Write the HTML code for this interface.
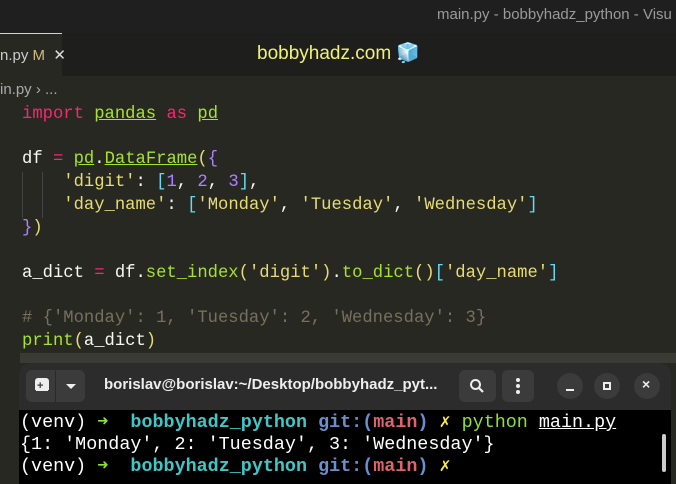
<!DOCTYPE html>
<html><head><style>
*{margin:0;padding:0;box-sizing:border-box}
body{width:676px;height:484px;overflow:hidden;background:#272822;position:relative;font-family:"Liberation Sans",sans-serif}
.abs{position:absolute;white-space:pre}
.code{font-family:"Liberation Mono",monospace;font-size:17.2px;color:#f8f8f2;line-height:20px}
.k{color:#f92672}.g{color:#a6e22e}.y{color:#e6db74}.b{color:#66d9ef}.p{color:#ae81ff}.c{color:#75715e}.u{text-decoration:underline;text-decoration-color:#a6e22e}
.term{font-family:"Liberation Mono",monospace;font-size:18.4px;color:#fff;line-height:22px}
.cy{color:#3fc7c7;font-weight:bold}.bl{color:#6a8fd0;font-weight:bold}.rd{color:#e0626a;font-weight:bold}
</style></head><body>
<div class="abs" style="left:0;top:0;width:676px;height:33px;background:#1f1f1f"></div>
<div class="abs" style="left:437px;top:6px;font-size:15px;color:#9a9a9a">main.py - bobbyhadz_python - Visu</div>
<div class="abs" style="left:0;top:33px;width:676px;height:43px;background:#1e1f1c"></div>
<div class="abs" style="left:0;top:33px;width:62px;height:43px;background:#272822;border-top:1px solid #e6db74"></div>
<div class="abs" style="left:0;top:46px;font-size:15px;color:#ccc">n.py <span style="color:#d4b97e">M</span>  <span style="color:#ddd">✕</span></div>
<div class="abs" style="left:257px;top:41px;font-size:19px;color:#f0f07a">bobbyhadz.com <span style="color:#6bb8e8">🧊</span></div>
<div class="abs" style="left:0;top:81px;font-size:15px;color:#aaa">in.py › ...</div>
<div class="abs code" style="left:22px;top:105px"><span class="k">import</span> <span class="g u">pandas</span> <span class="k">as</span> <span class="g u">pd</span></div>
<div class="abs code" style="left:22px;top:150px">df <span class="k">=</span> <span class="g u">pd</span>.<span class="g u">DataFrame</span><span class="y">(</span><span class="p">{</span></div>
<div class="abs" style="left:22px;top:172px;width:1px;height:46px;background:#444"></div>
<div class="abs" style="left:42px;top:172px;width:1px;height:46px;background:#444"></div>
<div class="abs code" style="left:22px;top:173px">    <span class="y">'digit'</span>: <span class="b">[</span><span class="p">1</span>, <span class="p">2</span>, <span class="p">3</span><span class="b">]</span>,</div>
<div class="abs code" style="left:22px;top:196px">    <span class="y">'day_name'</span>: <span class="b">[</span><span class="y">'Monday'</span>, <span class="y">'Tuesday'</span>, <span class="y">'Wednesday'</span><span class="b">]</span></div>
<div class="abs code" style="left:22px;top:219px"><span class="p">}</span><span class="y">)</span></div>
<div class="abs code" style="left:22px;top:264px">a_dict <span class="k">=</span> df.<span class="g">set_index</span><span class="y">(</span><span class="y">'digit'</span><span class="y">)</span>.<span class="g">to_dict</span><span class="y">()</span><span class="b">[</span><span class="y">'day_name'</span><span class="b">]</span></div>
<div class="abs code c" style="left:22px;top:309px"># {'Monday': 1, 'Tuesday': 2, 'Wednesday': 3}</div>
<div class="abs code" style="left:22px;top:332px"><span class="g">print</span><span class="y">(</span>a_dict<span class="y">)</span></div>
<div class="abs" style="left:20px;top:353px;width:656px;height:10px;background:#3a3b35"></div>
<div class="abs" style="left:19px;top:363px;width:652px;height:121px;background:#000;border-radius:10px 10px 0 0;overflow:hidden">
 <div class="abs" style="left:0;top:0;width:652px;height:47px;background:#2c2c2c"></div>
</div>
<div class="abs" style="left:26px;top:370px;width:59px;height:32px;background:#3b3b3b;border-radius:6px"></div>
<div class="abs" style="left:55px;top:370px;width:1px;height:32px;background:#2a2a2a"></div>
<div class="abs" style="left:35px;top:378px;width:14px;height:12px;background:#eee;border-radius:3px 3px 0 0"></div>
<div class="abs" style="left:36px;top:389px;width:12px;height:2px;background:#eee"></div>
<div class="abs" style="left:37px;top:382px;font-size:11px;line-height:8px;color:#3b3b3b;font-weight:bold">+</div>
<div class="abs" style="left:66px;top:384px;width:0;height:0;border-left:5px solid transparent;border-right:5px solid transparent;border-top:5px solid #eee"></div>
<div class="abs" style="left:104px;top:376px;font-size:15px;font-weight:bold;color:#eee">borislav@borislav:~/Desktop/bobbyhadz_pyt...</div>
<div class="abs" style="left:459px;top:370px;width:37px;height:32px;background:#3b3b3b;border-radius:6px"></div>
<svg class="abs" style="left:469px;top:378px" width="16" height="16"><circle cx="6.5" cy="6.5" r="4.5" stroke="#eee" stroke-width="2" fill="none"/><path d="M10 10l4 4" stroke="#eee" stroke-width="2.2"/></svg>
<div class="abs" style="left:502px;top:370px;width:32px;height:32px;background:#3b3b3b;border-radius:6px"></div>
<div class="abs" style="left:516px;top:378px;width:4px;height:4px;background:#eee;border-radius:2px;box-shadow:0 6px 0 #eee,0 12px 0 #eee"></div>
<div class="abs" style="left:557px;top:373px;width:26px;height:26px;background:#3b3b3b;border-radius:13px"></div>
<div class="abs" style="left:566px;top:389px;width:8px;height:2px;background:#eee"></div>
<div class="abs" style="left:594px;top:373px;width:26px;height:26px;background:#3b3b3b;border-radius:13px"></div>
<div class="abs" style="left:603px;top:382px;width:8px;height:8px;border:2px solid #eee"></div>
<div class="abs" style="left:634px;top:373px;width:26px;height:26px;background:#3b3b3b;border-radius:13px"></div>
<div class="abs" style="left:642px;top:376px;font-size:14px;font-weight:bold;color:#eee">×</div>
<div class="abs term" style="left:20px;top:412px">(venv) <span style="color:#8ae234">➜</span>  <span class="cy">bobbyhadz_python</span> <span class="bl">git:(</span><span class="rd">main</span><span class="bl">)</span> <span style="color:#fce94f">✗</span> <span style="color:#8ae234">python</span> <span style="text-decoration:underline">main.py</span></div>
<div class="abs term" style="left:20px;top:434px">{1: 'Monday', 2: 'Tuesday', 3: 'Wednesday'}</div>
<div class="abs term" style="left:20px;top:456px">(venv) <span style="color:#8ae234">➜</span>  <span class="cy">bobbyhadz_python</span> <span class="bl">git:(</span><span class="rd">main</span><span class="bl">)</span> <span style="color:#fce94f">✗</span></div>
<div class="abs" style="left:662px;top:434px;width:4px;height:38px;background:#ccc;border-radius:2px"></div>
</body></html>
